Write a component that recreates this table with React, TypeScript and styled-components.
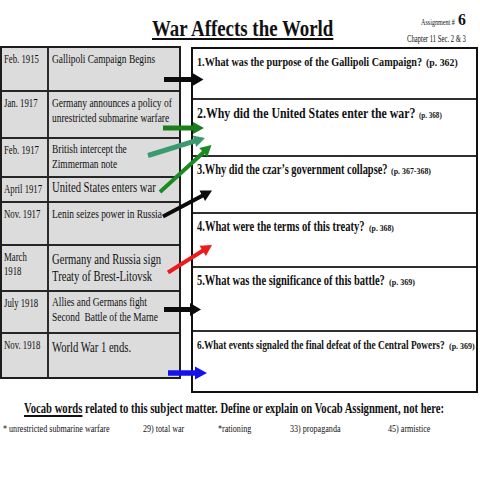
import React, { ReactNode, useLayoutEffect, useRef, useState } from "react";
import styled, { createGlobalStyle } from "styled-components";

const GlobalStyle = createGlobalStyle`
  html, body { margin: 0; padding: 0; background: #fff; }
  body {
    width: 480px; height: 480px; overflow: hidden;
    font-family: "Liberation Serif", "Times New Roman", serif;
    color: #111;
  }
`;

/* Narrow (condensed) text: scaled horizontally, with its flow width corrected after measuring */
const SqueezeBox = styled.span<{ $s: number }>`
  display: inline-block;
  white-space: nowrap;
  transform: scaleX(${(p) => p.$s});
  transform-origin: 0 50%;
`;

function Squeeze({ s = 0.76, children }: { s?: number; children: ReactNode }) {
  const ref = useRef<HTMLSpanElement>(null);
  const [mr, setMr] = useState(0);
  useLayoutEffect(() => {
    const measure = () => {
      if (ref.current) setMr(-ref.current.offsetWidth * (1 - s));
    };
    measure();
    if (document.fonts) document.fonts.ready.then(measure);
  }, [s]);
  return (
    <SqueezeBox ref={ref} $s={s} style={{ marginRight: mr }}>
      {children}
    </SqueezeBox>
  );
}

const Page = styled.div`
  position: relative;
  width: 480px;
  height: 480px;
`;

const Header = styled.header`
  display: flex;
  height: 46px;
`;

const Title = styled.h1`
  margin: 0;
  padding: 16px 0 0 152px;
  font-size: 24px;
  line-height: 24px;
  font-weight: 700;
`;

const Underline = styled.span`
  text-decoration: underline;
  text-decoration-thickness: 1.5px;
  text-underline-offset: 2px;
`;

const Assign = styled.div`
  margin-left: auto;
  padding: 10px 14px 0 0;
  display: flex;
  flex-direction: column;
  align-items: flex-end;
`;

const AssignLine = styled.div`
  display: flex;
  align-items: baseline;
  line-height: 18px;
`;

const AssignLabel = styled.span`
  font-size: 9px;
  margin-right: 3px;
`;

const AssignNum = styled.span`
  font-size: 17.5px;
  font-weight: 700;
`;

const Chapter = styled.div`
  font-size: 9.5px;
  line-height: 12px;
  margin-top: 2px;
`;

const Main = styled.main`
  display: flex;
  align-items: flex-start;
  gap: 10px;
`;

const Timeline = styled.div`
  width: 181px;
  box-sizing: border-box;
  border: 2px solid #1d1d1d;
  background: #dcdcdc;
  display: flex;
  flex-direction: column;
`;

const TRow = styled.div<{ $h: number; $last?: boolean }>`
  display: grid;
  grid-template-columns: 47px 1fr;
  height: ${(p) => p.$h}px;
  box-sizing: border-box;
  border-bottom: ${(p) => (p.$last ? "none" : "2px solid #262626")};
`;

const DateCell = styled.div`
  border-right: 2px solid #2c2c2c;
  padding: 5px 0 0 2px;
  font-size: 11.5px;
  line-height: 13.5px;
`;

const EventCell = styled.div<{ $big?: boolean; $pt: number }>`
  padding: ${(p) => p.$pt}px 0 0 3px;
  font-size: ${(p) => (p.$big ? 14 : 12.4)}px;
  line-height: 1.2;
`;

const Questions = styled.div`
  margin-top: 1px;
  width: 287px;
  box-sizing: border-box;
  border: 2px solid #111;
  background: #fff;
  display: flex;
  flex-direction: column;
`;

const QRow = styled.div<{ $h: number; $last?: boolean }>`
  height: ${(p) => p.$h}px;
  box-sizing: border-box;
  border-bottom: ${(p) => (p.$last ? "none" : "2px solid #303030")};
  padding: 5px 0 0 4px;
  display: flex;
  align-items: baseline;
  font-weight: 700;
  line-height: 16px;
`;

const QText = styled.span<{ $fs: number }>`
  font-size: ${(p) => p.$fs}px;
`;

const PageRef = styled.span<{ $fs: number }>`
  font-size: ${(p) => p.$fs}px;
  margin-left: 4px;
`;

const Vocab = styled.section`
  padding-top: 8px;
`;

const VocabHead = styled.div`
  padding-left: 24px;
  font-size: 14px;
  font-weight: 700;
  line-height: 16px;
`;

const VocabList = styled.div`
  display: grid;
  grid-template-columns: 140px 75px 72px 98px auto;
  margin-top: 5px;
  padding-left: 3px;
  font-size: 10.5px;
  line-height: 13px;
`;

const Overlay = styled.svg`
  position: absolute;
  left: 0;
  top: 0;
  pointer-events: none;
`;

type Ev = { date: ReactNode; text: ReactNode; h: number; big?: boolean; pt: number };

const events: Ev[] = [
  { date: "Feb. 1915", text: "Gallipoli Campaign Begins", h: 44, pt: 4 },
  { date: "Jan. 1917", text: <>Germany announces a policy of<br />unrestricted submarine warfare</>, h: 47, pt: 4 },
  { date: "Feb. 1917", text: <>British intercept the<br />Zimmerman note</>, h: 39, pt: 3 },
  { date: "April 1917", text: "United States enters war", h: 25, big: true, pt: 2 },
  { date: "Nov. 1917", text: "Lenin seizes power in Russia", h: 43, pt: 4 },
  { date: <>March<br />1918</>, text: <>Germany and Russia sign<br />Treaty of Brest-Litovsk</>, h: 46, big: true, pt: 6 },
  { date: "July 1918", text: <>Allies and Germans fight<br />Second&nbsp; Battle of the Marne</>, h: 42, pt: 3 },
  { date: "Nov. 1918", text: "World War 1 ends.", h: 43, big: true, pt: 6 },
];

type Q = { q: string; ref: string; fs: number; rfs: number; rs: number; h: number };

const questions: Q[] = [
  { q: "1.What was the purpose of the Gallipoli Campaign?", ref: "(p. 362)", fs: 13.4, rfs: 9.8, rs: 1, h: 51 },
  { q: "2.Why did the United States enter the war?", ref: "(p. 368)", fs: 15.6, rfs: 8.5, rs: 0.83, h: 57 },
  { q: "3.Why did the czar\u2019s government collapse?", ref: "(p. 367-368)", fs: 13.7, rfs: 8.5, rs: 0.93, h: 57 },
  { q: "4.What were the terms of this treaty?", ref: "(p. 368)", fs: 13.9, rfs: 8.5, rs: 0.91, h: 54 },
  { q: "5.What was the significance of this battle?", ref: "(p. 369)", fs: 13.8, rfs: 8.5, rs: 0.95, h: 64 },
  { q: "6.What events signaled the final defeat of the Central Powers?", ref: "(p. 369)", fs: 12.3, rfs: 8.5, rs: 0.94, h: 59 },
];

const vocab = [
  "* unrestricted submarine warfare",
  "29) total war",
  "*rationing",
  "33) propaganda",
  "45) armistice",
];

type Arrow = { x1: number; y1: number; x2: number; y2: number; w: number; hl: number; hw: number; c: string };

const arrows: Arrow[] = [
  { x1: 164, y1: 79.5, x2: 203.5, y2: 79.5, w: 5, hl: 11, hw: 13, c: "#0b0b0b" },
  { x1: 163, y1: 128, x2: 204, y2: 128, w: 5, hl: 11, hw: 12, c: "#1c7d1c" },
  { x1: 148, y1: 155.5, x2: 205, y2: 138, w: 5, hl: 11, hw: 12, c: "#3b9a70" },
  { x1: 160, y1: 192, x2: 211.5, y2: 145, w: 4, hl: 11, hw: 12, c: "#1a8a22" },
  { x1: 163, y1: 216.5, x2: 212, y2: 190.5, w: 4, hl: 11, hw: 12, c: "#0b0b0b" },
  { x1: 168, y1: 272.5, x2: 212, y2: 245, w: 4, hl: 11, hw: 12, c: "#ec1c1c" },
  { x1: 164, y1: 309.5, x2: 201, y2: 309.5, w: 5, hl: 11, hw: 13, c: "#0b0b0b" },
  { x1: 168, y1: 373, x2: 207, y2: 373, w: 5.5, hl: 12, hw: 13, c: "#1313ee" },
];

function arrowPoints(a: Arrow): string {
  const dx = a.x2 - a.x1;
  const dy = a.y2 - a.y1;
  const len = Math.hypot(dx, dy);
  const ux = dx / len;
  const uy = dy / len;
  const nx = -uy;
  const ny = ux;
  const bx = a.x2 - ux * a.hl;
  const by = a.y2 - uy * a.hl;
  const pts: [number, number][] = [
    [a.x1 + (nx * a.w) / 2, a.y1 + (ny * a.w) / 2],
    [bx + (nx * a.w) / 2, by + (ny * a.w) / 2],
    [bx + (nx * a.hw) / 2, by + (ny * a.hw) / 2],
    [a.x2, a.y2],
    [bx - (nx * a.hw) / 2, by - (ny * a.hw) / 2],
    [bx - (nx * a.w) / 2, by - (ny * a.w) / 2],
    [a.x1 - (nx * a.w) / 2, a.y1 - (ny * a.w) / 2],
  ];
  return pts.map(([x, y]) => `${x.toFixed(1)},${y.toFixed(1)}`).join(" ");
}

export default function App() {
  return (
    <Page>
      <GlobalStyle />
      <Header>
        <Title>
          <Squeeze s={0.787}>
            <Underline>War Affects the World</Underline>
          </Squeeze>
        </Title>
        <Assign>
          <AssignLine>
            <AssignLabel>
              <Squeeze s={0.68}>Assignment #</Squeeze>
            </AssignLabel>
            <AssignNum>
              <Squeeze s={0.9}>6</Squeeze>
            </AssignNum>
          </AssignLine>
          <Chapter>
            <Squeeze s={0.7}>Chapter 11 Sec. 2 &amp; 3</Squeeze>
          </Chapter>
        </Assign>
      </Header>

      <Main>
        <Timeline>
          {events.map((e, i) => (
            <TRow key={i} $h={e.h} $last={i === events.length - 1}>
              <DateCell>
                <Squeeze s={0.76}>{e.date}</Squeeze>
              </DateCell>
              <EventCell $big={e.big} $pt={e.pt}>
                <Squeeze s={0.76}>{e.text}</Squeeze>
              </EventCell>
            </TRow>
          ))}
        </Timeline>

        <Questions>
          {questions.map((q, i) => (
            <QRow key={i} $h={q.h} $last={i === questions.length - 1}>
              <QText $fs={q.fs}>
                <Squeeze s={0.76}>{q.q}</Squeeze>
              </QText>
              <PageRef $fs={q.rfs}>
                <Squeeze s={q.rs}>{q.ref}</Squeeze>
              </PageRef>
            </QRow>
          ))}
        </Questions>
      </Main>

      <Vocab>
        <VocabHead>
          <Squeeze s={0.76}>
            <Underline>Vocab words</Underline> related to this subject matter. Define or explain on Vocab
            Assignment, not here:
          </Squeeze>
        </VocabHead>
        <VocabList>
          {vocab.map((v) => (
            <span key={v}>
              <Squeeze s={0.77}>{v}</Squeeze>
            </span>
          ))}
        </VocabList>
      </Vocab>

      <Overlay width={480} height={480} viewBox="0 0 480 480">
        {arrows.map((a, i) => (
          <polygon key={i} points={arrowPoints(a)} fill={a.c} />
        ))}
      </Overlay>
    </Page>
  );
}
